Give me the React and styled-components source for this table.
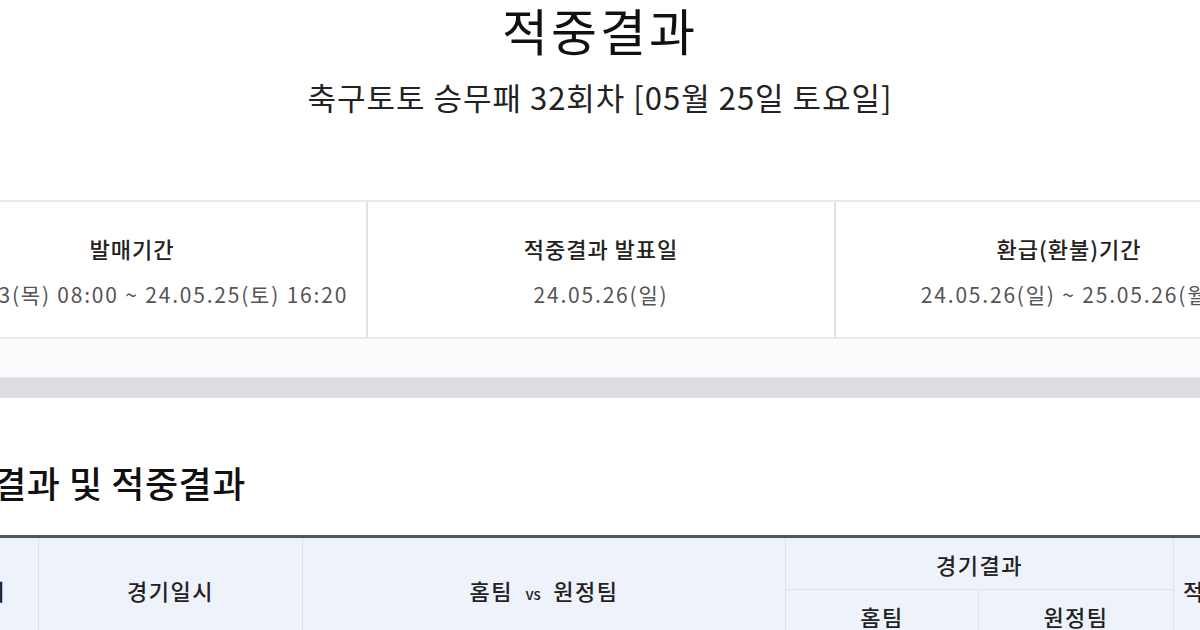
import React from 'react';
import styled, { createGlobalStyle } from 'styled-components';

const GlobalStyle = createGlobalStyle`
	html, body {
		margin: 0;
		padding: 0;
		background: #fff;
		overflow: hidden;
	}
	body {
		font-family: "Noto Sans CJK KR", "Noto Sans", sans-serif;
		color: #222;
	}
`;

const infoItems = [
	{ label: '발매기간', value: '24.05.23(목) 08:00 ~ 24.05.25(토) 16:20' },
	{ label: '적중결과 발표일', value: '24.05.26(일)' },
	{ label: '환급(환불)기간', value: '24.05.26(일) ~ 25.05.26(월)' },
];

const App = () => {
	return (
		<Page>
			<GlobalStyle />
			<TitleArea>
				<h1>적중결과</h1>
				<p>축구토토 승무패 32회차 [05월 25일 토요일]</p>
			</TitleArea>

			<InfoArea>
				<InfoRow>
					{infoItems.map((item) => (
						<InfoCell key={item.label}>
							<strong>{item.label}</strong>
							<span>{item.value}</span>
						</InfoCell>
					))}
				</InfoRow>
			</InfoArea>
			<Band />

			<Section>
				<SectionTitle>경기결과 및 적중결과</SectionTitle>
				<ResultTable>
					<colgroup>
						<col style={{ width: 108 }} />
						<col style={{ width: 264 }} />
						<col style={{ width: 483 }} />
						<col style={{ width: 193 }} />
						<col style={{ width: 195 }} />
						<col style={{ width: 97 }} />
					</colgroup>
					<thead>
						<tr>
							<Th rowSpan={2}>경기</Th>
							<Th rowSpan={2}>경기일시</Th>
							<Th rowSpan={2}>홈팀 <small>vs</small> 원정팀</Th>
							<Th colSpan={2}>경기결과</Th>
							<Th rowSpan={2} $last>적중결과</Th>
						</tr>
						<tr>
							<Th>홈팀</Th>
							<Th>원정팀</Th>
						</tr>
					</thead>
				</ResultTable>
			</Section>
		</Page>
	);
};

const Page = styled.div`
	width: 1200px;
	height: 630px;
	overflow: hidden;
`;

const TitleArea = styled.header`
	text-align: center;
	h1 {
		margin: 0;
		font-size: 50px;
		line-height: 58px;
		font-weight: 400;
		letter-spacing: 3px;
		color: #111;
	}
	p {
		margin: 19px 0 0;
		font-size: 31px;
		line-height: 40px;
		letter-spacing: 1px;
		color: #222;
	}
`;

const InfoArea = styled.section`
	margin-top: 83px;
	background: #fafbfc;
	padding-bottom: 38px;
	border-top: 2px solid #e9e9ea;
`;

const InfoRow = styled.div`
	width: 1404px;
	margin-left: -102px;
	display: grid;
	grid-template-columns: repeat(3, 1fr);
	background: #fff;
	border-bottom: 2px solid #e9e9ea;
`;

const InfoCell = styled.div`
	display: flex;
	flex-direction: column;
	align-items: center;
	padding: 30px 0 28px;
	border-left: 2px solid #e1e1e1;
	&:first-child {
		border-left: none;
	}
	strong {
		font-size: 22px;
		line-height: 32px;
		font-weight: 500;
		letter-spacing: 1px;
		color: #222;
		margin-bottom: 15px;
	}
	span {
		font-size: 21px;
		line-height: 30px;
		letter-spacing: 1.8px;
		color: #555;
		white-space: nowrap;
	}
`;

const Band = styled.div`
	height: 20px;
	background: #dcdee3;
	border-top: 1px solid #e4e6ea;
`;

const Section = styled.section`
	width: 1340px;
	margin-left: -70px;
	padding-top: 63px;
`;

const SectionTitle = styled.h2`
	margin: 0 0 32px -4px;
	font-size: 36px;
	line-height: 42px;
	font-weight: 500;
	letter-spacing: 0.5px;
	color: #111;
	white-space: nowrap;
`;

const ResultTable = styled.table`
	width: 100%;
	table-layout: fixed;
	border-collapse: collapse;
	border-top: 3px solid #555;
`;

const Th = styled.th`
	height: 51px;
	background: #eef2fa;
	border: 1px solid #dde2ea;
	border-top: none;
	font-size: 22px;
	font-weight: 500;
	letter-spacing: 1.5px;
	color: #222;
	white-space: nowrap;
	overflow: ${(p) => (p.$last ? 'visible' : 'hidden')};
	text-align: ${(p) => (p.$last ? 'left' : 'center')};
	padding: ${(p) => (p.$last ? '0 0 0 9px' : '0')};
	small {
		font-size: 15px;
		letter-spacing: 0;
		margin: 0 6px;
	}
`;

export default App;
